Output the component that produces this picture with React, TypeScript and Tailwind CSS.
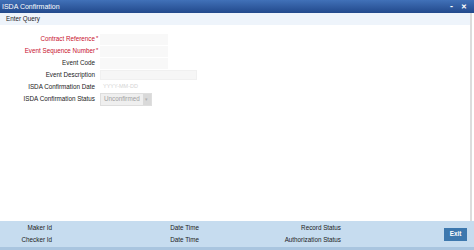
import React from "react";

const Field: React.FC<{ label: string; required?: boolean; children: React.ReactNode }> = ({
  label,
  required,
  children,
}) => (
  <div className="flex items-center h-[12px]">
    <div className={`w-[95px] text-right leading-none ${required ? "text-[#c8102e]" : "text-[#222]"}`}>{label}</div>
    <div className="w-[5px] text-[#c8102e] text-[6px] leading-none self-start pt-[2px] pl-[1px]">{required ? "*" : ""}</div>
    {children}
  </div>
);

const App: React.FC = () => {
  return (
    <div
      className="w-[474px] h-[250px] bg-white flex flex-col text-[6.3px] leading-none overflow-hidden"
      style={{ fontFamily: '"Liberation Sans", Arial, sans-serif' }}
    >
      <div className="h-[13px] shrink-0 flex items-center justify-between px-[2px] bg-gradient-to-b from-[#4171b8] to-[#22498c] text-white text-[7px]">
        <span>ISDA Confirmation</span>
        <div className="flex items-center gap-[8px] pr-[5px] font-bold">
          <span className="text-[9px] leading-none">-</span>
          <span className="text-[7px] leading-none">✕</span>
        </div>
      </div>
      <div className="flex flex-1 min-h-0">
        <div className="flex-1 flex flex-col">
          <div className="h-[12px] bg-[#eef4fb] flex items-center px-[6px] text-[#222]">Enter Query</div>
          <div className="flex flex-col pt-[8px]">
            <Field label="Contract Reference" required>
              <div className="w-[68px] h-[11px] bg-[#f8f8f8]" />
            </Field>
            <Field label="Event Sequence Number" required>
              <div className="w-[68px] h-[11px] bg-[#f8f8f8]" />
            </Field>
            <Field label="Event Code">
              <div className="w-[68px] h-[11px] bg-[#f8f8f8]" />
            </Field>
            <Field label="Event Description">
              <div className="w-[97px] h-[10px] bg-[#f6f6f6] border border-[#f0f0f0]" />
            </Field>
            <Field label="ISDA Confirmation Date">
              <div className="w-[68px] h-[10px] text-[#d4d4d4] text-[5.5px] flex items-center pl-[3px]">YYYY-MM-DD</div>
            </Field>
            <Field label="ISDA Confirmation Status">
              <div className="w-[52px] h-[13px] flex items-center bg-[#efefef] border border-[#dedede]">
                <span className="flex-1 px-[3px] text-[#a0a0a0]">Unconfirmed</span>
                <span className="w-[9px] h-full bg-[#d9d9d9] flex items-center justify-center text-[#b0b0b0] text-[5px]">▾</span>
              </div>
            </Field>
          </div>
        </div>
        <div className="w-[2px] bg-[#dcdcdc] mr-[2px]" />
      </div>
      <div className="h-[29px] shrink-0 bg-[#c6dcef] flex items-center text-[#222] border-b-[3px] border-[#a9c5df]">
        <div className="flex flex-col gap-[5px] w-[52px] text-right">
          <span>Maker Id</span>
          <span>Checker Id</span>
        </div>
        <div className="flex flex-col gap-[5px] w-[147px] text-right">
          <span>Date Time</span>
          <span>Date Time</span>
        </div>
        <div className="flex flex-col gap-[5px] w-[142px] text-right">
          <span>Record Status</span>
          <span>Authorization Status</span>
        </div>
        <div className="flex-1" />
        <button className="w-[23px] h-[13px] bg-[#3d78ae] text-white font-bold mr-[7px] text-[6.3px] leading-none">
          Exit
        </button>
      </div>
    </div>
  );
};

export default App;
